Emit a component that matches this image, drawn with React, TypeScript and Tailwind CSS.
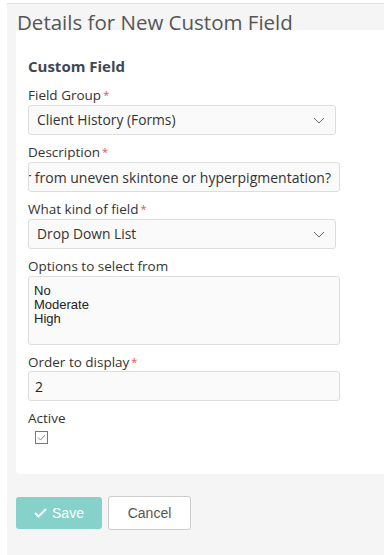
import React from "react";

const font = { fontFamily: "'Open Sans', 'Noto Sans', sans-serif" };

function Label({ text, required }: { text: string; required?: boolean }): JSX.Element {
  return (
    <div className="text-[13.5px] leading-[16px] text-[#333]">
      {text}
      {required && <span className="ml-[2px] text-[11px] align-top text-[#e55353]">*</span>}
    </div>
  );
}

function Chevron(): JSX.Element {
  return (
    <svg width="12" height="7" viewBox="0 0 12 7" fill="none" className="text-[#666]">
      <path d="M1 1l5 5 5-5" stroke="currentColor" strokeWidth="1" />
    </svg>
  );
}

function Select({ value }: { value: string }): JSX.Element {
  return (
    <div className="mt-[2px] flex h-[30px] w-[308px] items-center justify-between rounded-[3px] border border-[#ddd] bg-[#fafafa] pl-[8px] pr-[10px] text-[13.8px] text-[#333]">
      <span>{value}</span>
      <Chevron />
    </div>
  );
}

export default function App(): JSX.Element {
  return (
    <div className="flex min-h-[555px] bg-white" style={font}>
      <div className="w-[7px] shrink-0 bg-white" />
      <div className="mt-[3px] flex-1 border-t border-[#e3e3e3] bg-[#f5f5f5]">
        <h1 className="pl-[10px] pt-[9px] text-[20.5px] leading-[18px] text-[#555]">Details for New Custom Field</h1>
        <div className="ml-[9px] mt-[-1px] rounded-bl-[4px] bg-white pb-[30px] pl-[12px] pt-[26px]">
          <h2 className="text-[15px] font-bold leading-[20px] text-[#3d4852]">Custom Field</h2>

          <div className="mt-[11px]">
            <Label text="Field Group" required />
            <Select value="Client History (Forms)" />
          </div>

          <div className="mt-[9px]">
            <Label text="Description" required />
            <div className="mt-[2px] flex h-[30px] w-[312px] items-center justify-end overflow-hidden whitespace-nowrap rounded-[3px] border border-[#ddd] bg-[#fafafa] pr-[8px] text-[14px] text-[#333]">
              Does the client suffer from uneven skintone or hyperpigmentation?
            </div>
          </div>

          <div className="mt-[9px]">
            <Label text="What kind of field" required />
            <Select value="Drop Down List" />
          </div>

          <div className="mt-[9px]">
            <Label text="Options to select from" />
            <div className="mt-[2px] h-[69px] w-[312px] rounded-[3px] border border-[#ddd] bg-[#fafafa] px-[5px] pt-[7px] text-[13px] leading-[14px] text-[#222]" style={{ fontFamily: "'Liberation Sans', Arial, sans-serif" }}>
              <div>No</div>
              <div>Moderate</div>
              <div>High</div>
            </div>
          </div>

          <div className="mt-[9px]">
            <Label text="Order to display" required />
            <div className="mt-[1px] flex h-[30px] w-[312px] items-center rounded-[3px] border border-[#ddd] bg-[#fafafa] px-[6px] text-[14px] text-[#222]">
              2
            </div>
          </div>

          <div className="mt-[9px]">
            <Label text="Active" />
            <div className="ml-[7px] mt-[5px] flex h-[13px] w-[13px] items-center justify-center border border-[#767676] bg-white">
              <svg width="9" height="7" viewBox="0 0 9 7" fill="none">
                <path d="M1 3.5l2.5 2.5L8 1" stroke="#888" strokeWidth="1" />
              </svg>
            </div>
          </div>
        </div>

        <div className="ml-[9px] mt-[23px] flex gap-[6px]" style={{ fontFamily: "'Liberation Sans', Arial, sans-serif" }}>
          <button className="flex h-[32px] w-[86px] items-center justify-center gap-[5px] rounded-[3px] bg-[#86d1c9] text-[14px] text-white">
            <svg width="13" height="10" viewBox="0 0 13 10" fill="none">
              <path d="M1 5l3.5 3.5L12 1" stroke="white" strokeWidth="2" />
            </svg>
            Save
          </button>
          <button className="mt-[-1px] h-[34px] w-[83px] rounded-[3px] border border-[#ccc] bg-white text-[14px] text-[#555]">
            Cancel
          </button>
        </div>
      </div>
    </div>
  );
}
